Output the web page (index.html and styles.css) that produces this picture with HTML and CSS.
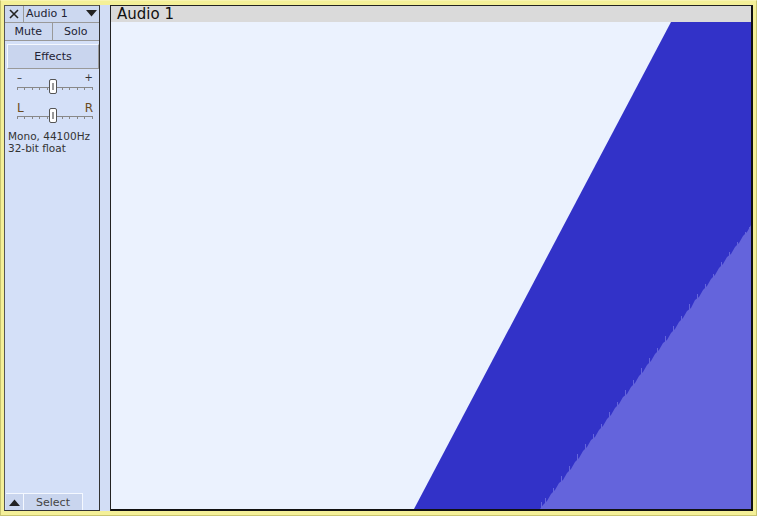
FILE: index.html
```html
<!DOCTYPE html>
<html>
<head>
<meta charset="utf-8">
<link rel="stylesheet" href="styles.css">
</head>
<body>
<div class="frame">
  <div class="inner">
    <div class="panel">
      <div class="row top">
        <div class="close">
          <svg width="10" height="10" viewBox="0 0 10 10"><path d="M1 1L9 9M9 1L1 9" stroke="#222" stroke-width="1.6"/></svg>
        </div>
        <div class="name">Audio 1
          <svg class="arrow" width="11" height="7" viewBox="0 0 11 7"><path d="M0 0H11L5.5 6.5Z" fill="#222"/></svg>
        </div>
      </div>
      <div class="row ms">
        <div class="btn">Mute</div>
        <div class="btn">Solo</div>
      </div>
      <div class="effects">Effects</div>
      <div class="slider">
        <div class="labels"><span class="minus">–</span><span class="plus">+</span></div>
        <svg class="track" width="76" height="17" viewBox="0 0 76 17">
          <path d="M0 9.5H76" stroke="#888" stroke-width="1"/>
          <path d="M0.5 9v3M7.5 10v2M15.5 10v2M22.5 10v2M30.5 10v2M45.5 10v2M52.5 10v2M60.5 10v2M67.5 10v2M75.5 9v3" stroke="#888" stroke-width="1"/>
          <rect x="32.5" y="1.5" width="7" height="14" rx="1.5" fill="#fff" stroke="#555"/>
          <path d="M36 5v7" stroke="#333"/>
        </svg>
      </div>
      <div class="slider pan">
        <div class="labels"><span>L</span><span>R</span></div>
        <svg class="track" width="76" height="17" viewBox="0 0 76 17">
          <path d="M0 9.5H76" stroke="#888" stroke-width="1"/>
          <path d="M0.5 9v3M7.5 10v2M15.5 10v2M22.5 10v2M30.5 10v2M45.5 10v2M52.5 10v2M60.5 10v2M67.5 10v2M75.5 9v3" stroke="#888" stroke-width="1"/>
          <rect x="32.5" y="1.5" width="7" height="14" rx="1.5" fill="#fff" stroke="#555"/>
          <path d="M36 5v7" stroke="#333"/>
        </svg>
      </div>
      <div class="info">Mono, 44100Hz<br>32-bit float</div>
      <div class="spacer"></div>
      <div class="bottom">
        <div class="collapse">
          <svg width="11" height="7" viewBox="0 0 11 7"><path d="M0 7H11L5.5 0.5Z" fill="#222"/></svg>
        </div>
        <div class="select">Select</div>
      </div>
    </div>
    <div class="strip"></div>
    <div class="track-area">
      <div class="title">Audio 1</div>
      <div class="canvas">
        <svg width="640" height="487" viewBox="0 0 640 487">
          <rect width="640" height="487" fill="#ebf2fe"/>
          <polygon points="560,0 640,0 640,487 303,487" fill="#3232c8"/>
          <polygon points="640,203 636,210 632,214 628,221 624,225 620,232 616,235 612,242 608,246 604,253 600,257 596,264 592,268 588,275 584,278 580,286 576,289 572,296 568,300 564,307 560,311 556,318 552,321 548,328 544,332 540,339 536,343 532,350 528,354 524,361 520,365 516,372 512,375 508,382 504,386 500,393 496,397 492,404 488,408 484,415 480,418 476,425 472,429 468,436 464,440 460,447 456,451 452,458 448,461 444,468 440,472 436,479 432,483 429,487 640,487" fill="#6464dc"/>
          <g stroke="#6464dc" stroke-width="1">
            <path d="M638.5 205v12M634.5 210v8M626.5 220v10M618.5 230v10M610.5 240v12M602.5 252v10M594.5 262v12M586.5 272v10M578.5 282v12M570.5 294v10M562.5 304v12M554.5 314v10M546.5 326v12M538.5 336v10M530.5 346v12M522.5 358v10M514.5 368v12M506.5 380v10M498.5 390v12M490.5 402v10M482.5 412v12M474.5 422v10M466.5 432v12M458.5 444v10M450.5 454v12M442.5 466v10M434.5 476v11M430.5 480v7"/>
          </g>
        </svg>
      </div>
    </div>
  </div>
</div>
</body>
</html>
```
FILE: styles.css
```css
html, body {
  margin: 0;
  padding: 0;
}
body {
  width: 757px;
  height: 516px;
  overflow: hidden;
  font-family: "DejaVu Sans", sans-serif;
}
.frame {
  box-sizing: border-box;
  width: 757px;
  height: 516px;
  background: #f4f098;
  border-left: 1px solid #c8c470;
  border-top: 1px solid #f8f4b0;
  border-right: 1px solid #c8c470;
  border-bottom: 1px solid #c8c470;
  padding: 4px 3px 4px 3px;
}
.inner {
  display: flex;
  height: 100%;
  background: #d2ddf5;
}
.panel {
  width: 96px;
  flex: none;
  box-sizing: border-box;
  border-left: 1px solid #555;
  border-top: 1px solid #555;
  border-right: 1px solid #333;
  border-bottom: 1px solid #333;
  background: #d4e0f8;
  display: flex;
  flex-direction: column;
  font-size: 11px;
  color: #333;
}
.row {
  display: flex;
}
.top {
  height: 16px;
  border-bottom: 1px solid #999;
}
.close {
  width: 18px;
  display: flex;
  align-items: center;
  justify-content: center;
  border-right: 1px solid #999;
  background: #ccd8f0;
}
.name {
  flex: 1;
  position: relative;
  padding-left: 2px;
  line-height: 15px;
  color: #223;
  background: #ccd8f0;
}
.arrow {
  position: absolute;
  right: 2px;
  top: 4px;
}
.ms {
  height: 17px;
  border-bottom: 1px solid #999;
}
.btn {
  flex: 1;
  text-align: center;
  line-height: 17px;
  background: #ccd8f0;
  color: #223;
}
.btn + .btn {
  border-left: 1px solid #999;
}
.effects {
  margin: 3px 0 0 2px;
  height: 25px;
  box-sizing: border-box;
  border: 1px solid #999;
  border-top-color: #f4f8ff;
  border-left-color: #f4f8ff;
  background: #c9d5ee;
  text-align: center;
  line-height: 23px;
  color: #223;
}
.slider {
  margin-top: 4px;
  padding-left: 12px;
  height: 22px;
  position: relative;
}
.slider .labels {
  display: flex;
  justify-content: space-between;
  width: 76px;
  font-size: 10px;
  line-height: 10px;
  color: #333;
}
.slider .track {
  position: absolute;
  left: 12px;
  top: 5px;
  display: block;
}
.pan {
  margin-top: 7px;
}
.pan .labels {
  font-size: 12px;
  line-height: 12px;
  color: #6a4a20;
}
.info {
  margin-top: 6px;
  padding-left: 3px;
  line-height: 12px;
  font-size: 10.5px;
  color: #333;
}
.spacer {
  flex: 1;
}
.bottom {
  display: flex;
  height: 17px;
  margin-left: 1px;
}
.collapse {
  width: 17px;
  display: flex;
  align-items: center;
  justify-content: center;
  border-top: 1px solid #f4f8ff;
  border-right: 1px solid #f4f8ff;
  background: #c9d5ee;
}
.select {
  width: 58px;
  text-align: center;
  line-height: 17px;
  border-top: 1px solid #f4f8ff;
  border-right: 1px solid #f4f8ff;
  background: #c9d5ee;
  color: #444;
}
.strip {
  width: 10px;
  flex: none;
  border-right: 1px solid #222;
  background: #d2ddf5;
}
.track-area {
  flex: 1;
  display: flex;
  flex-direction: column;
  border-top: 1px solid #222;
  border-right: 2px solid #111;
  border-bottom: 2px solid #111;
  background: #ebf2fe;
}
.title {
  height: 16px;
  background: #dadada;
  font-size: 15px;
  line-height: 16px;
  padding-left: 6px;
  color: #111;
}
.canvas {
  flex: 1;
  overflow: hidden;
}
.canvas svg {
  display: block;
}
```
